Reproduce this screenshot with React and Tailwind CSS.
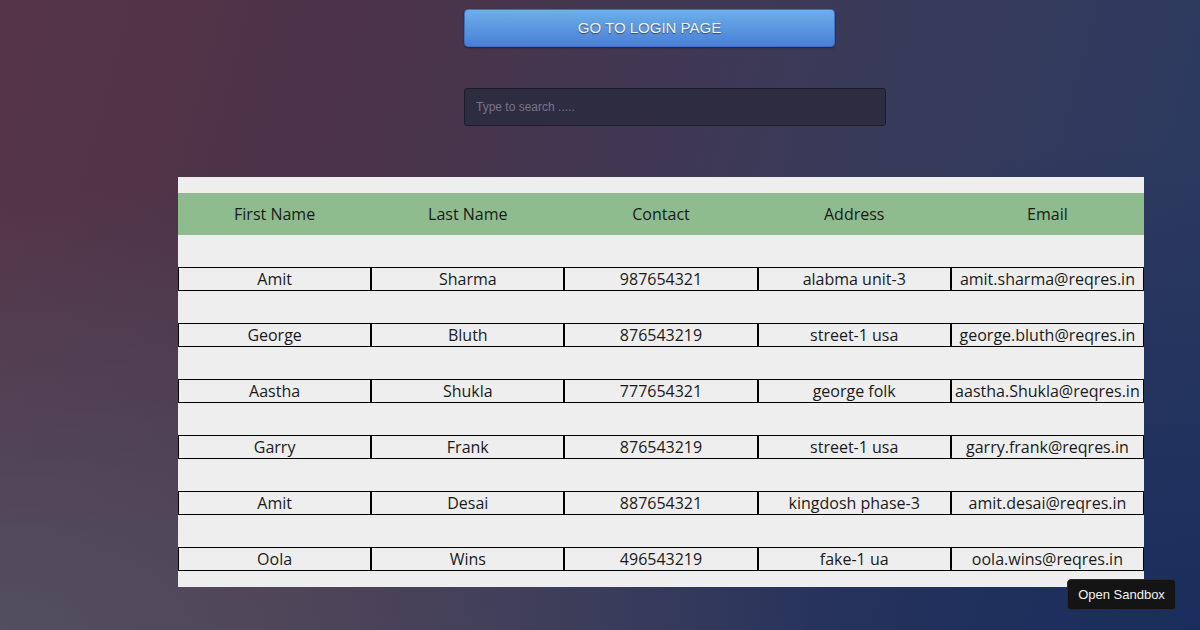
const users = [
  ['Amit', 'Sharma', '987654321', 'alabma unit-3', 'amit.sharma@reqres.in'],
  ['George', 'Bluth', '876543219', 'street-1 usa', 'george.bluth@reqres.in'],
  ['Aastha', 'Shukla', '777654321', 'george folk', 'aastha.Shukla@reqres.in'],
  ['Garry', 'Frank', '876543219', 'street-1 usa', 'garry.frank@reqres.in'],
  ['Amit', 'Desai', '887654321', 'kingdosh phase-3', 'amit.desai@reqres.in'],
  ['Oola', 'Wins', '496543219', 'fake-1 ua', 'oola.wins@reqres.in'],
];

const headers = ['First Name', 'Last Name', 'Contact', 'Address', 'Email'];

export default function App() {
  return (
    <div className="relative h-[630px] w-[1200px] overflow-hidden bg-[radial-gradient(ellipse_at_0%_100%,rgba(82,80,98,0.95)_0%,rgba(82,80,98,0)_50%),radial-gradient(ellipse_at_100%_100%,rgba(27,45,92,1)_0%,rgba(27,45,92,0)_55%),linear-gradient(105deg,#563447_0%,#4a3349_30%,#3b3a58_60%,#283a62_100%)]">
      <div className="flex flex-col pl-[464px] pt-[9px]">
        {/* Login button */}
        <button className="h-[38px] w-[371px] rounded-[4px] border border-[#3f6fc4] bg-[linear-gradient(to_bottom,#6cb0e8,#4a7fd8)] font-['Liberation_Sans',Arial,sans-serif] text-[15px] text-[#f2f2e6] shadow-[0_1px_2px_rgba(0,0,0,0.4)] [text-shadow:0_1px_1px_rgba(0,0,0,0.5)]">
          GO TO LOGIN PAGE
        </button>

        {/* Search */}
        <input
          type="text"
          placeholder="Type to search ....."
          className="mt-[41px] h-[38px] w-[422px] rounded-[3px] border border-[#1e1c2a] bg-[#2e2c40] px-[11px] font-['Liberation_Sans',Arial,sans-serif] text-[12px] text-white placeholder:text-[#76748a] outline-none"
        />
      </div>

      {/* Users table */}
      <div className="ml-[178px] mt-[51px] flex w-[966px] flex-col gap-8 bg-[#eeeeee] py-4 font-['Open_Sans',sans-serif] text-[16px] text-[#1a1a1a]">
        <div className="flex h-[42px] items-center bg-[#8fbc8f]">
          {headers.map((h) => (
            <div key={h} className="flex-1 text-center">
              {h}
            </div>
          ))}
        </div>
        {users.map((u, i) => (
          <div key={i} className="flex">
            {u.map((v, j) => (
              <div
                key={j}
                className="h-[24px] flex-1 border border-black text-center leading-[22px] whitespace-nowrap"
              >
                {v}
              </div>
            ))}
          </div>
        ))}
      </div>

      <div className="absolute left-[1067px] top-[579px] flex h-[31px] w-[109px] items-center justify-center rounded-[4px] border border-[#2a2a2a] bg-[#141414] font-['Liberation_Sans',Arial,sans-serif] text-[13px] text-[#f2f2f2]">
        Open Sandbox
      </div>
    </div>
  );
}
